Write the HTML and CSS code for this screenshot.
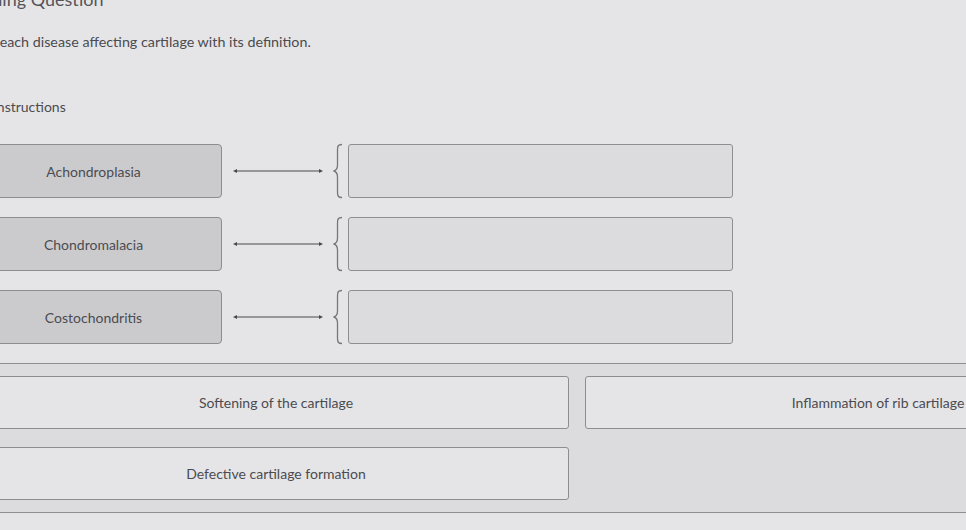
FILE: index.html
```html
<!DOCTYPE html>
<html>
<head>
<title>Matching Question</title>
<link rel="stylesheet" href="styles.css">
</head>
<body>

<div class="pregunta">
  <h1 class="pregunta__titulo">Matching Question</h1>
  <p class="pregunta__enunciado">Match each disease affecting cartilage with its definition.</p>
  <p class="pregunta__instrucciones">Instructions</p>

  <div class="pares">
    <div class="par">
      <div class="termino">Achondroplasia</div>
      <svg class="flecha" width="92" height="8" viewBox="0 0 92 8"><path d="M4 4H88" stroke="#4a4a4e" stroke-width="1.2"/><path d="M1 4L5 2V6Z M91 4L87 2V6Z" fill="#4a4a4e"/></svg>
      <svg class="llave" width="12" height="56" viewBox="0 0 12 56"><path d="M10 1.5C6 1.5 5.5 3 5.5 7V22C5.5 26 4.5 27.5 1.5 28C4.5 28.5 5.5 30 5.5 34V49C5.5 53 6 54.5 10 54.5" fill="none" stroke="#77777b" stroke-width="1.3"/></svg>
      <div class="hueco"></div>
    </div>
    <div class="par">
      <div class="termino">Chondromalacia</div>
      <svg class="flecha" width="92" height="8" viewBox="0 0 92 8"><path d="M4 4H88" stroke="#4a4a4e" stroke-width="1.2"/><path d="M1 4L5 2V6Z M91 4L87 2V6Z" fill="#4a4a4e"/></svg>
      <svg class="llave" width="12" height="56" viewBox="0 0 12 56"><path d="M10 1.5C6 1.5 5.5 3 5.5 7V22C5.5 26 4.5 27.5 1.5 28C4.5 28.5 5.5 30 5.5 34V49C5.5 53 6 54.5 10 54.5" fill="none" stroke="#77777b" stroke-width="1.3"/></svg>
      <div class="hueco"></div>
    </div>
    <div class="par">
      <div class="termino">Costochondritis</div>
      <svg class="flecha" width="92" height="8" viewBox="0 0 92 8"><path d="M4 4H88" stroke="#4a4a4e" stroke-width="1.2"/><path d="M1 4L5 2V6Z M91 4L87 2V6Z" fill="#4a4a4e"/></svg>
      <svg class="llave" width="12" height="56" viewBox="0 0 12 56"><path d="M10 1.5C6 1.5 5.5 3 5.5 7V22C5.5 26 4.5 27.5 1.5 28C4.5 28.5 5.5 30 5.5 34V49C5.5 53 6 54.5 10 54.5" fill="none" stroke="#77777b" stroke-width="1.3"/></svg>
      <div class="hueco"></div>
    </div>
  </div>
</div>

<div class="opciones">
  <div class="opcion">Softening of the cartilage</div>
  <div class="opcion">Inflammation of rib cartilage</div>
  <div class="opcion">Defective cartilage formation</div>
</div>

</body>
</html>
```

FILE: styles.css
```css
html {
  font-family: Lato, "Open Sans", sans-serif;
}

body {
	margin: 0;
	height: 530px;
	overflow: hidden;
	background-color: #e5e5e7;
	color: #4b4b50;
}

.pregunta {
	margin-left: -35px;
}

.pregunta__titulo {
	font-size: 18px;
	font-weight: normal;
	margin: -11px 0 0 -13px;
	line-height: 20px;
	color: #55555a;
}

.pregunta__enunciado {
	font-size: 14.3px;
	margin: 24px 0 0 -9px;
	line-height: 18px;
}

.pregunta__instrucciones {
	font-size: 14px;
	margin: 47px 0 0 28px;
	line-height: 18px;
}

.pares {
	margin-top: 28px;
	display: flex;
	flex-direction: column;
	gap: 19px;
}

.par {
	display: flex;
	align-items: center;
	height: 54px;
}

.termino {
	box-sizing: border-box;
	width: 257px;
	height: 54px;
	display: flex;
	align-items: center;
	justify-content: center;
	font-size: 14px;
	background-color: #cbcbce;
	border: 1.5px solid #8d8d91;
	border-radius: 4px;
}

.flecha {
	margin-left: 10px;
}

.llave {
	margin-left: 8px;
}

.hueco {
	box-sizing: border-box;
	width: 385px;
	height: 54px;
	margin-left: 4px;
	background-color: #dcdcdf;
	border: 1.5px solid #8f8f93;
	border-radius: 3px;
}

.opciones {
	margin-top: 19px;
	border-top: 1.5px solid #8f8f93;
	border-bottom: 1.5px solid #8f8f93;
	background-color: #dcdcde;
	padding: 12px 0 12px 0;
	margin-left: -17px;
	width: 1220px;
	display: grid;
	grid-template-columns: 586px 586px;
	column-gap: 16px;
	row-gap: 18px;
}

.opcion {
	box-sizing: border-box;
	height: 53px;
	display: flex;
	align-items: center;
	justify-content: center;
	font-size: 14px;
	background-color: #e5e5e7;
	border: 1.5px solid #8d8d91;
	border-radius: 3px;
}
```
